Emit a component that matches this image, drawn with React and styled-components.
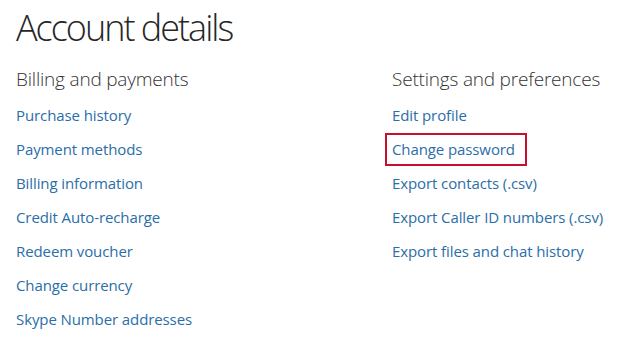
import React from "react";
import styled, { createGlobalStyle } from "styled-components";

const GlobalStyle = createGlobalStyle`
  html, body {
    margin: 0;
    padding: 0;
    background: #fff;
  }
  body {
    font-family: "Open Sans", "Noto Sans", "Liberation Sans", sans-serif;
  }
`;

const Page = styled.div`
  width: 641px;
  height: 344px;
  overflow: hidden;
  padding: 4px 0 0 16px;
  box-sizing: border-box;
`;

const Title = styled.h1`
  margin: 0;
  font-size: 36px;
  font-weight: 300;
  color: #262626;
  letter-spacing: -2px;
  line-height: 48px;
`;

const Columns = styled.div`
  display: grid;
  grid-template-columns: 376px 1fr;
  margin-top: 12px;
`;

const Section = styled.section`
  display: flex;
  flex-direction: column;
`;

const Heading = styled.h2`
  margin: 0 0 4px;
  font-size: 19px;
  font-weight: 300;
  color: #333;
  line-height: 30px;
  letter-spacing: -0.2px;
`;

const LinkList = styled.ul`
  list-style: none;
  margin: 0;
  padding: 0;
  display: flex;
  flex-direction: column;
`;

const Item = styled.li`
  height: 34px;
  display: flex;
  align-items: center;
`;

const Link = styled.a`
  font-size: 15px;
  color: #2a6ea8;
  text-decoration: none;
  line-height: 21px;
  letter-spacing: -0.1px;
  padding: ${(p) => (p.$boxed ? "4px 10px 4px 5px" : "0")};
  margin-left: ${(p) => (p.$boxed ? "-7px" : "0")};
  border: ${(p) => (p.$boxed ? "2px solid #c8102e" : "none")};
`;

const billing = [
  "Purchase history",
  "Payment methods",
  "Billing information",
  "Credit Auto-recharge",
  "Redeem voucher",
  "Change currency",
  "Skype Number addresses",
];

const settings = [
  "Edit profile",
  "Change password",
  "Export contacts (.csv)",
  "Export Caller ID numbers (.csv)",
  "Export files and chat history",
];

export default function App() {
  return (
    <>
      <GlobalStyle />
      <Page>
        <Title>Account details</Title>
        <Columns>
          <Section>
            <Heading>Billing and payments</Heading>
            <LinkList>
              {billing.map((t) => (
                <Item key={t}>
                  <Link href="#">{t}</Link>
                </Item>
              ))}
            </LinkList>
          </Section>
          <Section>
            <Heading>Settings and preferences</Heading>
            <LinkList>
              {settings.map((t) => (
                <Item key={t}>
                  <Link href="#" $boxed={t === "Change password"}>
                    {t}
                  </Link>
                </Item>
              ))}
            </LinkList>
          </Section>
        </Columns>
      </Page>
    </>
  );
}
